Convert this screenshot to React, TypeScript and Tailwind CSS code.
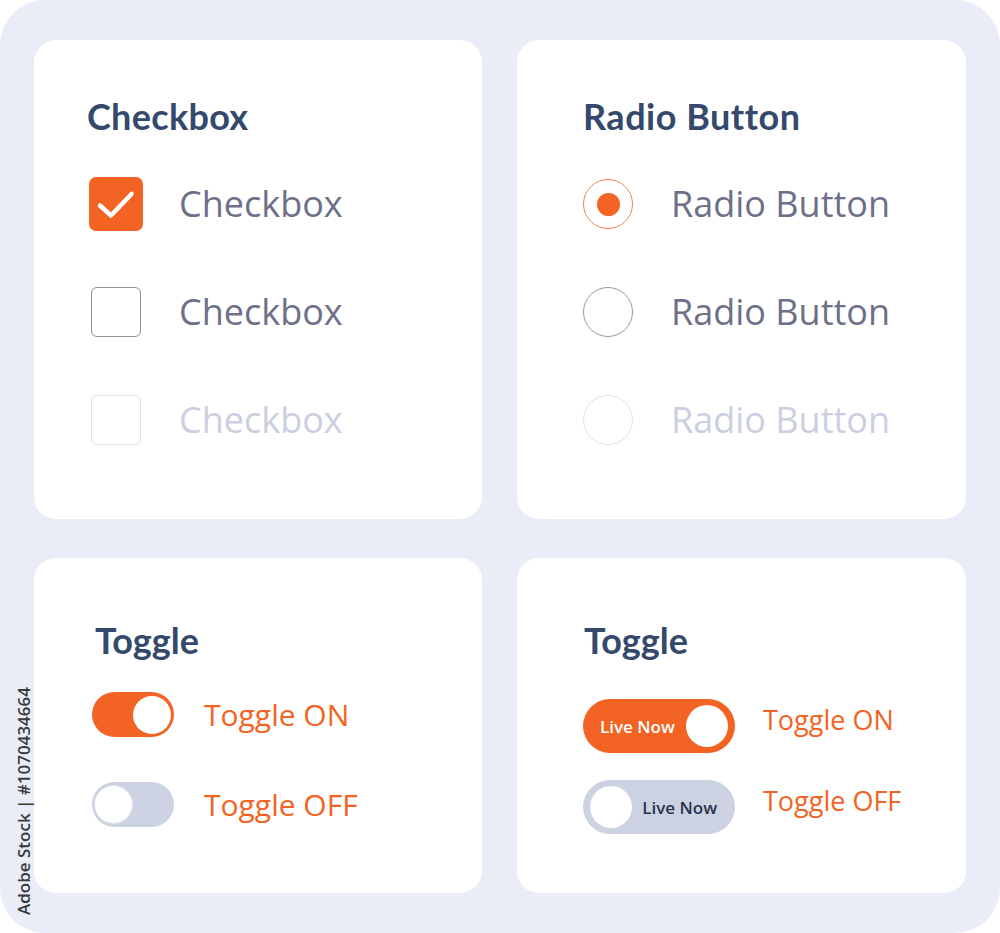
import type { ReactNode } from "react";

function Card({ className, children }: { className: string; children: ReactNode }) {
  return <div className={`rounded-[22px] bg-white ${className}`}>{children}</div>;
}

function Heading({ children, className = "" }: { children: ReactNode; className?: string }) {
  return (
    <h2
      className={`h-[40px] font-['Lato',sans-serif] text-[36px] leading-[40px] font-bold text-[#34496c] ${className}`}
    >
      {children}
    </h2>
  );
}

function CheckRow({ state }: { state: "checked" | "empty" | "disabled" }) {
  return (
    <div className="flex h-[54px] items-center gap-[36px]">
      <div className="flex w-[54px] justify-center">
        {state === "checked" ? (
          <div className="h-[54px] w-[54px] rounded-[7px] bg-[#f26324]">
            <svg viewBox="0 0 54 54" className="h-[54px] w-[54px]">
              <path
                d="M11 28.5 L22 38.5 L42.5 17"
                fill="none"
                stroke="white"
                strokeWidth="4.5"
                strokeLinecap="round"
                strokeLinejoin="round"
              />
            </svg>
          </div>
        ) : (
          <div
            className={`h-[50px] w-[50px] rounded-[6px] border ${
              state === "empty" ? "border-[#8e8e96]" : "border-[#dfe2ec]"
            }`}
          />
        )}
      </div>
      <span
        className={`text-[36px] leading-none ${
          state === "disabled" ? "text-[#cbcfe1]" : "text-[#6e7088]"
        }`}
      >
        Checkbox
      </span>
    </div>
  );
}

function RadioRow({ state }: { state: "checked" | "empty" | "disabled" }) {
  const ring =
    state === "checked"
      ? "border-[#f4824e]"
      : state === "empty"
        ? "border-[#98989e]"
        : "border-[#e1e3ec]";
  return (
    <div className="flex h-[54px] items-center gap-[38px]">
      <div className={`flex h-[50px] w-[50px] items-center justify-center rounded-full border ${ring}`}>
        {state === "checked" && <div className="h-[23px] w-[23px] rounded-full bg-[#f26324]" />}
      </div>
      <span
        className={`text-[36px] leading-none ${
          state === "disabled" ? "text-[#cbcfe1]" : "text-[#6e7088]"
        }`}
      >
        Radio Button
      </span>
    </div>
  );
}

export default function App() {
  return (
    <div className="relative h-[933px] w-[1000px] overflow-hidden rounded-[45px] bg-[#eaedf7] pt-[40px] pl-[34px] font-['Open_Sans',sans-serif]">
      <div className="grid grid-cols-[448px_449px] grid-rows-[479px_335px] gap-x-[35px] gap-y-[39px]">
        <Card className="pt-[56px] pl-[55px]">
          <Heading className="-ml-[2px] tracking-[0.3px]">Checkbox</Heading>
          <div className="mt-[41px] flex flex-col gap-[54px]">
            <CheckRow state="checked" />
            <CheckRow state="empty" />
            <CheckRow state="disabled" />
          </div>
        </Card>

        <Card className="pt-[56px] pl-[66px]">
          <Heading className="ml-0 tracking-[0.5px]">Radio Button</Heading>
          <div className="mt-[41px] flex flex-col gap-[54px]">
            <RadioRow state="checked" />
            <RadioRow state="empty" />
            <RadioRow state="disabled" />
          </div>
        </Card>

        <Card className="pt-[62px] pl-[58px]">
          <Heading className="ml-[3px]">Toggle</Heading>
          <div className="mt-[32px] flex flex-col gap-[45px]">
            <div className="flex h-[45px] items-center gap-[30px]">
              <div className="flex h-[45px] w-[82px] items-center justify-end rounded-full bg-[#f26324] pr-[3px]">
                <div className="h-[38px] w-[38px] rounded-full bg-white" />
              </div>
              <span className="text-[30px] leading-none text-[#f26324]">Toggle ON</span>
            </div>
            <div className="flex h-[45px] items-center gap-[30px]">
              <div className="flex h-[45px] w-[82px] items-center rounded-full bg-[#cdd2e2] pl-[2px]">
                <div className="h-[39px] w-[39px] rounded-full border border-[#dfe2ec] bg-white" />
              </div>
              <span className="text-[30px] leading-none text-[#f26324]">Toggle OFF</span>
            </div>
          </div>
        </Card>

        <Card className="pt-[62px] pl-[66px]">
          <Heading className="ml-[1px]">Toggle</Heading>
          <div className="mt-[39px] flex flex-col gap-[27px]">
            <div className="flex h-[54px] items-center gap-[28px]">
              <div className="flex h-[54px] w-[152px] items-center justify-between rounded-full bg-[#f26324] pr-[7px] pl-[17px]">
                <span className="text-[17px] leading-none font-semibold text-white">Live Now</span>
                <div className="h-[42px] w-[42px] rounded-full bg-white" />
              </div>
              <span className="mb-[14px] text-[27px] leading-none text-[#f26324]">Toggle ON</span>
            </div>
            <div className="flex h-[54px] items-center gap-[28px]">
              <div className="flex h-[54px] w-[152px] items-center justify-between rounded-full bg-[#cdd2e2] pr-[18px] pl-[7px]">
                <div className="h-[42px] w-[42px] rounded-full bg-white" />
                <span className="text-[17px] leading-none font-semibold text-[#27324f]">Live Now</span>
              </div>
              <span className="mb-[14px] text-[27px] leading-none text-[#f26324]">Toggle OFF</span>
            </div>
          </div>
        </Card>
      </div>

      <span className="absolute top-[801px] left-[23px] -translate-x-1/2 -translate-y-1/2 -rotate-90 text-[17px] leading-none font-semibold whitespace-nowrap text-[#3a3a3a]">
        Adobe Stock | #1070434664
      </span>
    </div>
  );
}
